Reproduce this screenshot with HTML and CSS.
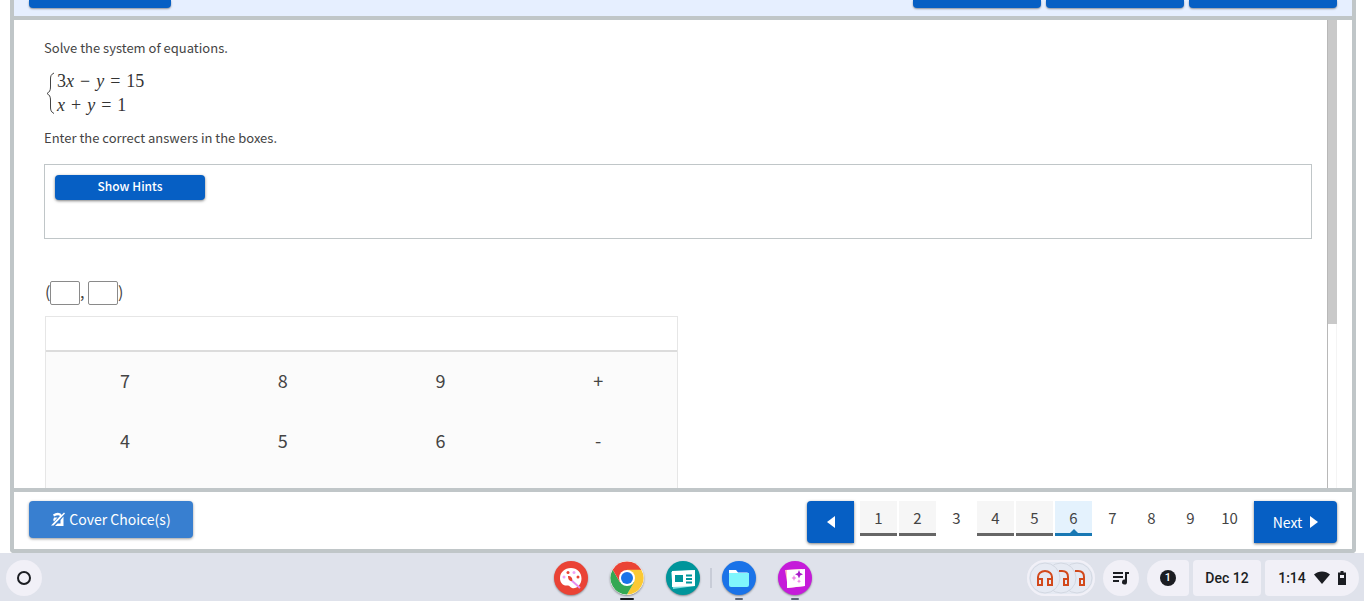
FILE: index.html
```html
<!DOCTYPE html>
<html lang="en">
<head>
  <meta charset="UTF-8">
  <title>Practice - Systems of Equations</title>
  <meta name="viewport" content="width=device-width, initial-scale=1.0"/>
  <link rel="stylesheet" href="styles.css">
</head>
<body>

  <main class="frame">
    <header class="top-bar">
      <button type="button" class="top-btn menu" aria-label="Menu"></button>
      <div class="top-group">
        <button type="button" class="top-btn save" aria-label="Save"></button>
        <button type="button" class="top-btn review" aria-label="Review"></button>
        <button type="button" class="top-btn submit" aria-label="Submit"></button>
      </div>
    </header>

    <div class="question-area">
      <section class="question">
        <p>Solve the system of equations.</p>
        <div class="system">
          <svg class="brace" viewBox="0 0 10 44" aria-hidden="true">
            <path d="M9 2C6 3.500 5.500 5 5.500 8V16C5.500 19.500 4.500 21 2 22.500C4.500 24 5.500 25.500 5.500 29V36C5.500 39 6 41 9 42.500"/>
          </svg>
          <div class="equations">
            <div class="eq"><span>3<i>x</i></span><span>−</span><i>y</i><span>=</span><span>15</span></div>
            <div class="eq"><i>x</i><span>+</span><i>y</i><span>=</span><span>1</span></div>
          </div>
        </div>
        <p>Enter the correct answers in the boxes.</p>

        <div class="hints">
          <button type="button" class="hint-btn">Show Hints</button>
        </div>

        <div class="answer">
          <span class="paren">(</span><input type="text" aria-label="x value"><span class="comma">,</span><input type="text" aria-label="y value"><span class="paren">)</span>
        </div>

        <div class="keypad">
          <div class="keypad-head"></div>
          <div class="keys">
            <button type="button">7</button>
            <button type="button">8</button>
            <button type="button">9</button>
            <button type="button">+</button>
            <button type="button">4</button>
            <button type="button">5</button>
            <button type="button">6</button>
            <button type="button">-</button>
          </div>
        </div>
      </section>
      <div class="scrollbar"><div class="thumb"></div></div>
    </div>

    <footer class="bottom-bar">
      <button type="button" class="cover-btn">
        <svg width="14" height="16" viewBox="0 0 14 16" aria-hidden="true">
          <path d="M2 3.500Q6 .5 9.500 2.500Q10.500 3 10.500 4L13 1.500L14 2.500L2.500 14.500H0L9 5Q7.500 3.500 3 5.500Z" fill="#fff"/>
          <path d="M3 6.500H6.500L3 10.500Q1.500 9 3 6.500ZM12.500 5.500V15H4L6.500 12.500H9.500V9Z" fill="#fff"/>
        </svg>
        Cover Choice(s)
      </button>
      <nav class="pager">
        <button type="button" class="nav-btn prev" aria-label="Previous">
          <svg width="8" height="12" viewBox="0 0 8 12"><path d="M8 0V12L0 6Z" fill="#fff"/></svg>
        </button>
        <div class="pages">
          <a href="#1" class="done">1</a>
          <a href="#2" class="done">2</a>
          <a href="#3">3</a>
          <a href="#4" class="done">4</a>
          <a href="#5" class="done">5</a>
          <a href="#6" class="current">6</a>
          <a href="#7">7</a>
          <a href="#8">8</a>
          <a href="#9">9</a>
          <a href="#10">10</a>
        </div>
        <button type="button" class="nav-btn next">Next
          <svg width="8" height="12" viewBox="0 0 8 12" aria-hidden="true"><path d="M0 0V12L8 6Z" fill="#fff"/></svg>
        </button>
      </nav>
    </footer>
  </main>

  <div class="shelf">
    <button type="button" class="launcher" aria-label="Launcher">
      <svg width="16" height="16" viewBox="0 0 16 16"><circle cx="8" cy="8" r="6" fill="none" stroke="#1b1d22" stroke-width="2"/></svg>
    </button>

    <div class="apps">
      <button type="button" class="app canvas" aria-label="Canvas">
        <svg viewBox="0 0 34 34">
          <path d="M17 7C10.500 7 6 11.500 6 17C6 22 9.500 25 13 24.500C16 24 15.500 26 18 27C22 28.500 27.500 24 27.500 17.500C27.500 11.500 23 7 17 7Z" fill="#fff"/>
          <circle cx="10" cy="16" r="1.500" fill="#f0a4f5"/>
          <circle cx="14" cy="11.500" r="1.500" fill="#ea4335"/>
          <circle cx="20" cy="11.500" r="1.500" fill="#f0a4f5"/>
          <circle cx="24" cy="16" r="1.500" fill="#ea4335"/>
          <path d="M16 18L26 27" stroke="#e58df0" stroke-width="2"/>
          <path d="M14 15C17 15 19 17 18 20C15 20 14 18 14 15Z" fill="#ea4335"/>
        </svg>
      </button>
      <button type="button" class="app chrome running active" aria-label="Chrome">
        <svg viewBox="0 0 34 34">
          <path d="M17 17L2.700 8.750A16.500 16.500 0 0 1 31.300 8.750Z" fill="#ea4335"/>
          <path d="M17 8.750H31.300A16.500 16.500 0 0 1 17 33.500L24 21Z" fill="#fbc934"/>
          <path d="M2.700 8.750A16.500 16.500 0 0 0 17 33.500L24.150 21.100L9.800 21.100Z" fill="#34a853"/>
          <path d="M2.700 8.750H17V17L9.850 21.100Z" fill="#ea4335"/>
          <circle cx="17" cy="17" r="8" fill="#fff"/>
          <circle cx="17" cy="17" r="6" fill="#1a73e8"/>
        </svg>
      </button>
      <button type="button" class="app news" aria-label="News">
        <svg viewBox="0 0 34 34">
          <path d="M5 11L27 9L29 25L7 28Z" fill="#80dce0"/>
          <path d="M6 10L29 9V25L6 26Z" fill="#fff"/>
          <path d="M9 14H17V21H9Z" fill="#00959b"/>
          <path d="M20 14.500H26M20 18H26M20 21.500H26" stroke="#00959b" stroke-width="2"/>
        </svg>
      </button>
      <span class="divider"></span>
      <button type="button" class="app files running" aria-label="Files">
        <svg viewBox="0 0 34 34">
          <path d="M7 9H14L16 11.500H25Q27 11.500 27 13.500V18H7Z" fill="#fff"/>
          <path d="M7 12H27V24Q27 26 25 26H9Q7 26 7 24Z" fill="#80f6fc"/>
        </svg>
      </button>
      <button type="button" class="app gallery running" aria-label="Gallery">
        <svg viewBox="0 0 34 34">
          <path d="M7 9L24 8L27 25L10 27Z" fill="#ffc2c0"/>
          <path d="M9 9L27 8V25L9 27Z" fill="#fff"/>
          <path d="M21 9L22.200 12L25 13.200L22.200 14.400L21 17.500L19.800 14.400L17 13.200L19.800 12Z" fill="#a81bc9"/>
          <path d="M16 14L16.800 16L18.500 17L16.800 18L16 20L15.200 18L13.500 17L15.200 16Z" fill="#ef87e9"/>
          <path d="M21 18L21.600 19.500L23 20.200L21.600 21L21 22.500L20.400 21L19 20.200L20.400 19.500Z" fill="#ef87e9"/>
        </svg>
      </button>
    </div>

    <div class="status">
      <button type="button" class="phones" aria-label="Audio tabs">
        <svg width="68" height="36" viewBox="0 0 68 36">
          <g fill="#e6eaf3" stroke="#d3d8e2">
            <circle cx="50" cy="18" r="15"/>
            <circle cx="34" cy="18" r="15"/>
            <circle cx="18" cy="18" r="15"/>
          </g>
          <g fill="none" stroke="#d2491c" stroke-width="2">
            <path d="M11 19V17A7 6 0 0 1 25 17V25H21V19H25M11 17V25H15V19H11"/>
            <path d="M32 11H35Q41 11 41 17V25H37V19H41"/>
            <path d="M48 11H51Q57 11 57 17V25H53V19H57"/>
          </g>
        </svg>
      </button>
      <button type="button" class="media" aria-label="Media controls">
        <svg width="16" height="14" viewBox="0 0 16 14">
          <path d="M0 2H10M0 6H10M0 10H6" stroke="#1b1d22" stroke-width="2"/>
          <path d="M16 1V3H14V11A2.500 2.500 0 1 1 12 8.600V1Z" fill="#1b1d22"/>
        </svg>
      </button>
      <div class="tray">
        <button type="button" class="notif"><span class="count">1</span></button>
        <button type="button" class="date">Dec 12</button>
        <button type="button" class="clock">1:14
          <svg width="16" height="13" viewBox="0 0 16 13" aria-hidden="true"><path d="M0 3.500C4.500 -.5 11.500 -.5 16 3.500L8 13Z" fill="#1b1d22"/></svg>
          <svg width="8" height="14" viewBox="0 0 8 14" aria-hidden="true"><path d="M2.500 0H5.500V1.500H8V14H0V1.500H2.500Z" fill="#1b1d22"/><path d="M2 4H6V7H2Z" fill="#f1f0f7"/></svg>
        </button>
      </div>
    </div>
  </div>

</body>
</html>
```

FILE: styles.css
```css
* {
  box-sizing: border-box;
}
body {
  margin: 0;
  height: 100vh;
  display: flex;
  flex-direction: column;
  background-color: #fff;
  color: #444;
  font-family: "Noto Sans CJK SC", "Noto Sans", sans-serif;
  font-size: 13px;
  overflow: hidden;
}
button {
  border: none;
  padding: 0;
  font-family: inherit;
  cursor: pointer;
}
svg {
  display: block;
}

/* page frame */
.frame {
  flex: 1;
  min-height: 0;
  display: flex;
  flex-direction: column;
  background-color: #fff;
  border: 4px solid #c0c6c8;
  border-top: none;
  border-radius: 0 0 4px 4px;
  margin: 0 8px 0 10px;
}
.top-bar {
  display: flex;
  justify-content: space-between;
  align-items: flex-end;
  height: 20px;
  flex-shrink: 0;
  padding: 0 15px 8px;
  background-color: #e6efff;
  border-bottom: 4px solid #c0c6c8;
}
.top-group {
  display: flex;
  gap: 5px;
}
.top-btn {
  height: 8px;
  background-color: #065fc4;
  border-radius: 0 0 4px 4px;
  box-shadow: 0 1px 2px rgba(0,0,0,0.4);
}
.menu { width: 142px; }
.save { width: 128px; }
.review { width: 138px; }
.submit { width: 148px; }

/* question */
.question-area {
  flex: 1;
  min-height: 0;
  display: flex;
  padding-right: 15px;
}
.question {
  flex: 1;
  min-width: 0;
  padding: 18px 15px 0 30px;
  overflow: hidden;
}
.question p {
  margin: 0;
  line-height: 20px;
}
.system {
  display: flex;
  align-items: center;
  gap: 2px;
  padding: 11px 0;
  color: #333;
}
.brace {
  width: 10px;
  height: 44px;
  margin-left: 1px;
}
.brace path {
  fill: none;
  stroke: #444;
  stroke-width: 1;
}
.equations {
  font-family: "Liberation Serif", serif;
  font-size: 18px;
  line-height: 24px;
}
.eq {
  display: flex;
  gap: 6px;
}
.hints {
  height: 75px;
  margin-top: 16px;
  padding: 10px;
  border: 1px solid #c0c6c8;
}
.hint-btn {
  width: 150px;
  height: 25px;
  background-color: #065fc4;
  color: #fff;
  border-radius: 4px;
  font-size: 12px;
  font-weight: 500;
  line-height: 21px;
  padding-bottom: 4px;
  box-shadow: 0 1px 3px rgba(0,0,0,0.5);
}
.answer {
  display: flex;
  align-items: center;
  height: 24px;
  margin: 42px 0 11px 1px;
}
.answer input {
  width: 30px;
  height: 24px;
  border: 1px solid #8a8a8a;
  border-radius: 2px;
}
.paren,
.comma {
  width: 5px;
  font-size: 16px;
  line-height: 20px;
  padding-bottom: 4px;
}
.comma {
  width: 8px;
}
.keypad {
  width: 633px;
  max-width: 100%;
  margin-left: 1px;
  border: 1px solid #e6e6e6;
  background-color: #fbfbfb;
}
.keypad-head {
  height: 35px;
  background-color: #fff;
  border-bottom: 2px solid #dcdcdc;
}
.keys {
  display: grid;
  grid-template-columns: repeat(4, 1fr);
  grid-auto-rows: 60px;
  height: 240px;
}
.keys button {
  background: none;
  color: #444;
  font-size: 18px;
  padding-bottom: 5px;
}

/* footer */
.bottom-bar {
  display: flex;
  justify-content: space-between;
  align-items: flex-start;
  height: 61px;
  flex-shrink: 0;
  padding: 9px 15px 0;
  border-top: 4px solid #c0c6c8;
}
.cover-btn {
  display: flex;
  align-items: center;
  justify-content: center;
  gap: 4px;
  width: 164px;
  height: 37px;
  padding-bottom: 2px;
  background-color: #387fd0;
  color: #fff;
  font-size: 14px;
  border-radius: 4px;
  box-shadow: 0 1px 3px rgba(0,0,0,0.4);
}
.pager {
  display: flex;
  gap: 6px;
}
.nav-btn {
  display: flex;
  align-items: center;
  justify-content: center;
  gap: 8px;
  height: 42px;
  padding-bottom: 1px;
  background-color: #065fc4;
  color: #fff;
  font-size: 14px;
  box-shadow: 0 1px 3px rgba(0,0,0,0.5);
}
.prev {
  width: 47px;
  border-radius: 4px 0 0 4px;
}
.next {
  width: 83px;
  border-radius: 0 4px 4px 0;
}
.pages {
  display: flex;
  gap: 2px;
}
.pages a {
  position: relative;
  width: 37px;
  height: 35px;
  border-bottom: 3px solid transparent;
  color: #444;
  font-size: 15px;
  line-height: 33px;
  text-align: center;
  text-decoration: none;
}
.pages .done {
  background-color: #f6f6f6;
  border-color: #666;
}
.pages .current {
  background-color: #e4f2fd;
  border-color: #1878b4;
}
.pages .current::after {
  content: "";
  position: absolute;
  left: 50%;
  bottom: 0;
  margin-left: -4px;
  border: 4px solid transparent;
  border-top: none;
  border-bottom-color: #1878b4;
}

/* scrollbar */
.scrollbar {
  width: 10px;
  border-left: 1px solid #b8b8b8;
  border-right: 1px solid #f4f4f4;
}
.thumb {
  height: 65%;
  width: 9px;
  background-color: #c9c9c9;
}

/* shelf */
.shelf {
  display: grid;
  grid-template-columns: 1fr auto 1fr;
  align-items: center;
  height: 48px;
  flex-shrink: 0;
  padding: 1px 5px 0 6px;
  background-color: #dfe2eb;
  color: #1b1d22;
  font-family: Roboto, sans-serif;
}
.shelf button {
  color: inherit;
}
.launcher,
.media {
  display: flex;
  align-items: center;
  justify-content: center;
  width: 36px;
  height: 36px;
  border-radius: 50%;
  background-color: #f1f0f7;
}
.apps {
  display: flex;
  align-items: center;
  gap: 22px;
}
.app {
  position: relative;
  width: 34px;
  height: 34px;
  border-radius: 50%;
  box-shadow: 0 1px 2px rgba(0,0,0,0.4);
}
.canvas { background-color: #ea4335; }
.chrome { background-color: #fff; }
.news { background-color: #00959b; }
.files { background-color: #1a73e8; }
.gallery { background-color: #c51bd9; }
.running::after {
  content: "";
  position: absolute;
  left: 50%;
  bottom: -5px;
  width: 8px;
  height: 2px;
  margin-left: -4px;
  border-radius: 1px;
  background-color: #5a6577;
}
.active::after {
  width: 14px;
  margin-left: -7px;
  background-color: #1b1d22;
}
.divider {
  width: 2px;
  height: 20px;
  margin: 0 -12px;
  background-color: #c8ccd7;
}
.status {
  display: flex;
  justify-content: flex-end;
  gap: 8px;
}
.phones {
  border-radius: 18px;
  background-color: #e6eaf3;
  box-shadow: inset 0 0 0 2px #f1f0f7;
}
.tray {
  display: flex;
  gap: 4px;
}
.tray button {
  display: flex;
  align-items: center;
  justify-content: center;
  height: 36px;
  background-color: #f1f0f7;
  border-radius: 4px;
  font-size: 14px;
  font-weight: 500;
}
.tray .notif {
  width: 42px;
  border-radius: 18px 4px 4px 18px;
}
.tray .date {
  width: 68px;
}
.tray .clock {
  width: 94px;
  gap: 8px;
  border-radius: 4px 18px 18px 4px;
}
.count {
  width: 16px;
  height: 16px;
  border-radius: 50%;
  background-color: #1b1d22;
  color: #fff;
  font-size: 11px;
  line-height: 16px;
}
```
